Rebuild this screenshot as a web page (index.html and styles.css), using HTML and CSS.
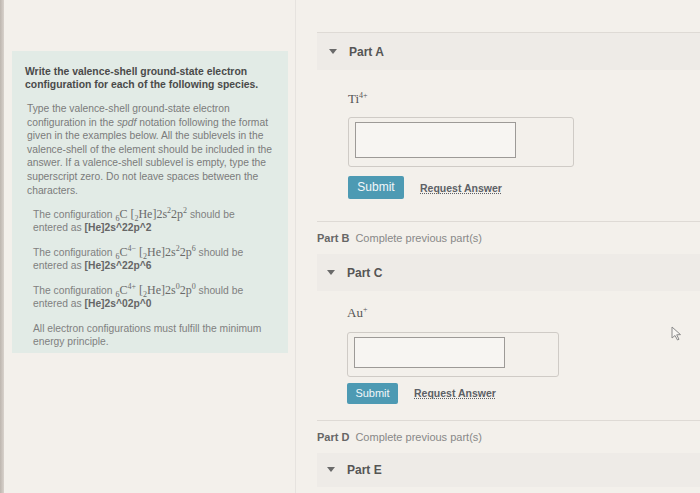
FILE: index.html
```html
<!DOCTYPE html>
<html lang="en">
<head>
    <meta charset="UTF-8">
    <title>Electron Configuration</title>
    <link rel="stylesheet" href="styles.css">
</head>
<body>
    <div class="page">
        <div class="edge"></div>
        <div class="left">
            <div class="instructions">
                <div class="intro">Write the valence-shell ground-state electron configuration for each of the following species.</div>
                <p class="text">Type the valence-shell ground-state electron configuration in the <i>spdf</i> notation following the format given in the examples below. All the sublevels in the valence-shell of the element should be included in the answer. If a valence-shell sublevel is empty, type the superscript zero. Do not leave spaces between the characters.</p>
                <p class="example">The configuration <span class="chem"><sub>6</sub>C [<sub>2</sub>He]2s<sup>2</sup>2p<sup>2</sup></span> should be entered as <b>[He]2s^22p^2</b></p>
                <p class="example">The configuration <span class="chem"><sub>6</sub>C<sup>4&minus;</sup> [<sub>2</sub>He]2s<sup>2</sup>2p<sup>6</sup></span> should be entered as <b>[He]2s^22p^6</b></p>
                <p class="example">The configuration <span class="chem"><sub>6</sub>C<sup>4+</sup> [<sub>2</sub>He]2s<sup>0</sup>2p<sup>0</sup></span> should be entered as <b>[He]2s^02p^0</b></p>
                <p class="example">All electron configurations must fulfill the minimum energy principle.</p>
            </div>
        </div>
        <div class="right">
            <div class="part part-a">
                <div class="part-head"><span class="arrow"></span>Part A</div>
                <div class="part-body">
                    <div class="species">Ti<sup>4+</sup></div>
                    <div class="answer"><div class="field"></div></div>
                    <div class="actions">
                        <span class="submit">Submit</span>
                        <span class="request">Request Answer</span>
                    </div>
                </div>
            </div>
            <div class="locked"><b>Part B</b> Complete previous part(s)</div>
            <div class="part part-c">
                <div class="part-head"><span class="arrow"></span>Part C</div>
                <div class="part-body">
                    <div class="species">Au<sup>+</sup></div>
                    <div class="answer small"><div class="field"></div></div>
                    <div class="actions">
                        <span class="submit">Submit</span>
                        <span class="request">Request Answer</span>
                    </div>
                </div>
            </div>
            <div class="locked"><b>Part D</b> Complete previous part(s)</div>
            <div class="part part-e">
                <div class="part-head"><span class="arrow"></span>Part E</div>
            </div>
        </div>
    </div>
    <svg class="cursor" width="11" height="15" viewBox="0 0 11 15">
        <path d="M1 1 L1 12 L4 9.5 L6.5 14 L8 13.3 L5.7 8.8 L9.5 8.6 Z" fill="#f7f5f2" stroke="#8a8a8a" stroke-width="1"/>
    </svg>
</body>
</html>
```

FILE: styles.css
```css
body {
    margin: 0;
    width: 700px;
    height: 493px;
    overflow: hidden;
    background: #f3f0eb;
    font-family: "Liberation Sans", Arial, sans-serif;
    position: relative;
}
.page {
    display: flex;
    height: 100%;
}
.edge {
    width: 4px;
    background: linear-gradient(90deg, #bdb6af, #d8d2cc);
}
.left {
    width: 292px;
    padding: 51px 0 0 8px;
    box-sizing: border-box;
    border-right: 1px solid #e6e3df;
}
.instructions {
    background: #e2ebe6;
    width: 276px;
    height: 302px;
    box-sizing: border-box;
    padding: 14px 12px 0 13px;
}
.intro {
    font-size: 10.4px;
    font-weight: bold;
    line-height: 13px;
    color: #4a4a4a;
    margin-bottom: 11px;
}
.text {
    margin: 0 0 11px 2px;
    font-size: 10.3px;
    line-height: 13.6px;
    color: #7b7b7b;
}
.example {
    margin: 0 14px 12px 8px;
    font-size: 10.3px;
    line-height: 13px;
    color: #808080;
}
.example b {
    color: #666;
}
.chem {
    font-family: "Liberation Serif", "Times New Roman", serif;
    font-size: 12px;
    color: #6a6a6a;
}
.chem sub, .chem sup {
    font-size: 8px;
    line-height: 0;
}
.right {
    flex: 1;
    padding: 32px 0 0 21px;
}
.part-a {
    border-top: 1px solid #dedad5;
}
.part-head {
    height: 37px;
    display: flex;
    align-items: center;
    padding-left: 12px;
    background: #eeebe7;
    font-size: 12px;
    font-weight: bold;
    color: #555;
}
.arrow {
    width: 0;
    height: 0;
    border-left: 4px solid transparent;
    border-right: 4px solid transparent;
    border-top: 5px solid #6a6a6a;
    margin-right: 12px;
}
.part-body {
    padding: 18px 0 22px 31px;
}
.species {
    font-family: "Liberation Serif", "Times New Roman", serif;
    font-size: 13px;
    line-height: 16px;
    color: #555;
    margin-bottom: 10px;
}
.species sup {
    font-size: 8px;
}
.answer {
    width: 226px;
    height: 50px;
    box-sizing: border-box;
    border: 1px solid #cfcbc6;
    border-radius: 3px;
    padding: 4px 6px;
}
.field {
    width: 161px;
    height: 36px;
    box-sizing: border-box;
    border: 1px solid #9d9a97;
    background: #f7f5f2;
}
.answer.small {
    width: 212px;
    height: 45px;
}
.answer.small .field {
    width: 151px;
    height: 31px;
}
.actions {
    display: flex;
    align-items: center;
    margin-top: 9px;
}
.submit {
    background: #4d9ab3;
    color: #f2f7f9;
    font-size: 12px;
    width: 56px;
    height: 23px;
    line-height: 23px;
    text-align: center;
    border-radius: 2px;
}
.request {
    margin-left: 16px;
    font-size: 10.5px;
    font-weight: bold;
    color: #5d6166;
    text-decoration: underline;
    text-decoration-style: dotted;
}
.part-c .part-body {
    padding: 11px 0 16px 30px;
}
.part-c .actions {
    margin-top: 6px;
}
.part-c .submit {
    width: 51px;
    height: 21px;
    line-height: 21px;
    font-size: 11px;
}
.locked {
    border-top: 1px solid #dedad5;
    height: 32px;
    display: flex;
    align-items: center;
    font-size: 11px;
    color: #888;
}
.locked b {
    color: #666;
    margin-right: 6px;
}
.part-c .part-head, .part-e .part-head {
    padding-left: 10px;
}
.part-e .part-head {
    height: 34px;
}
.cursor {
    position: absolute;
    left: 671px;
    top: 326px;
}
```
